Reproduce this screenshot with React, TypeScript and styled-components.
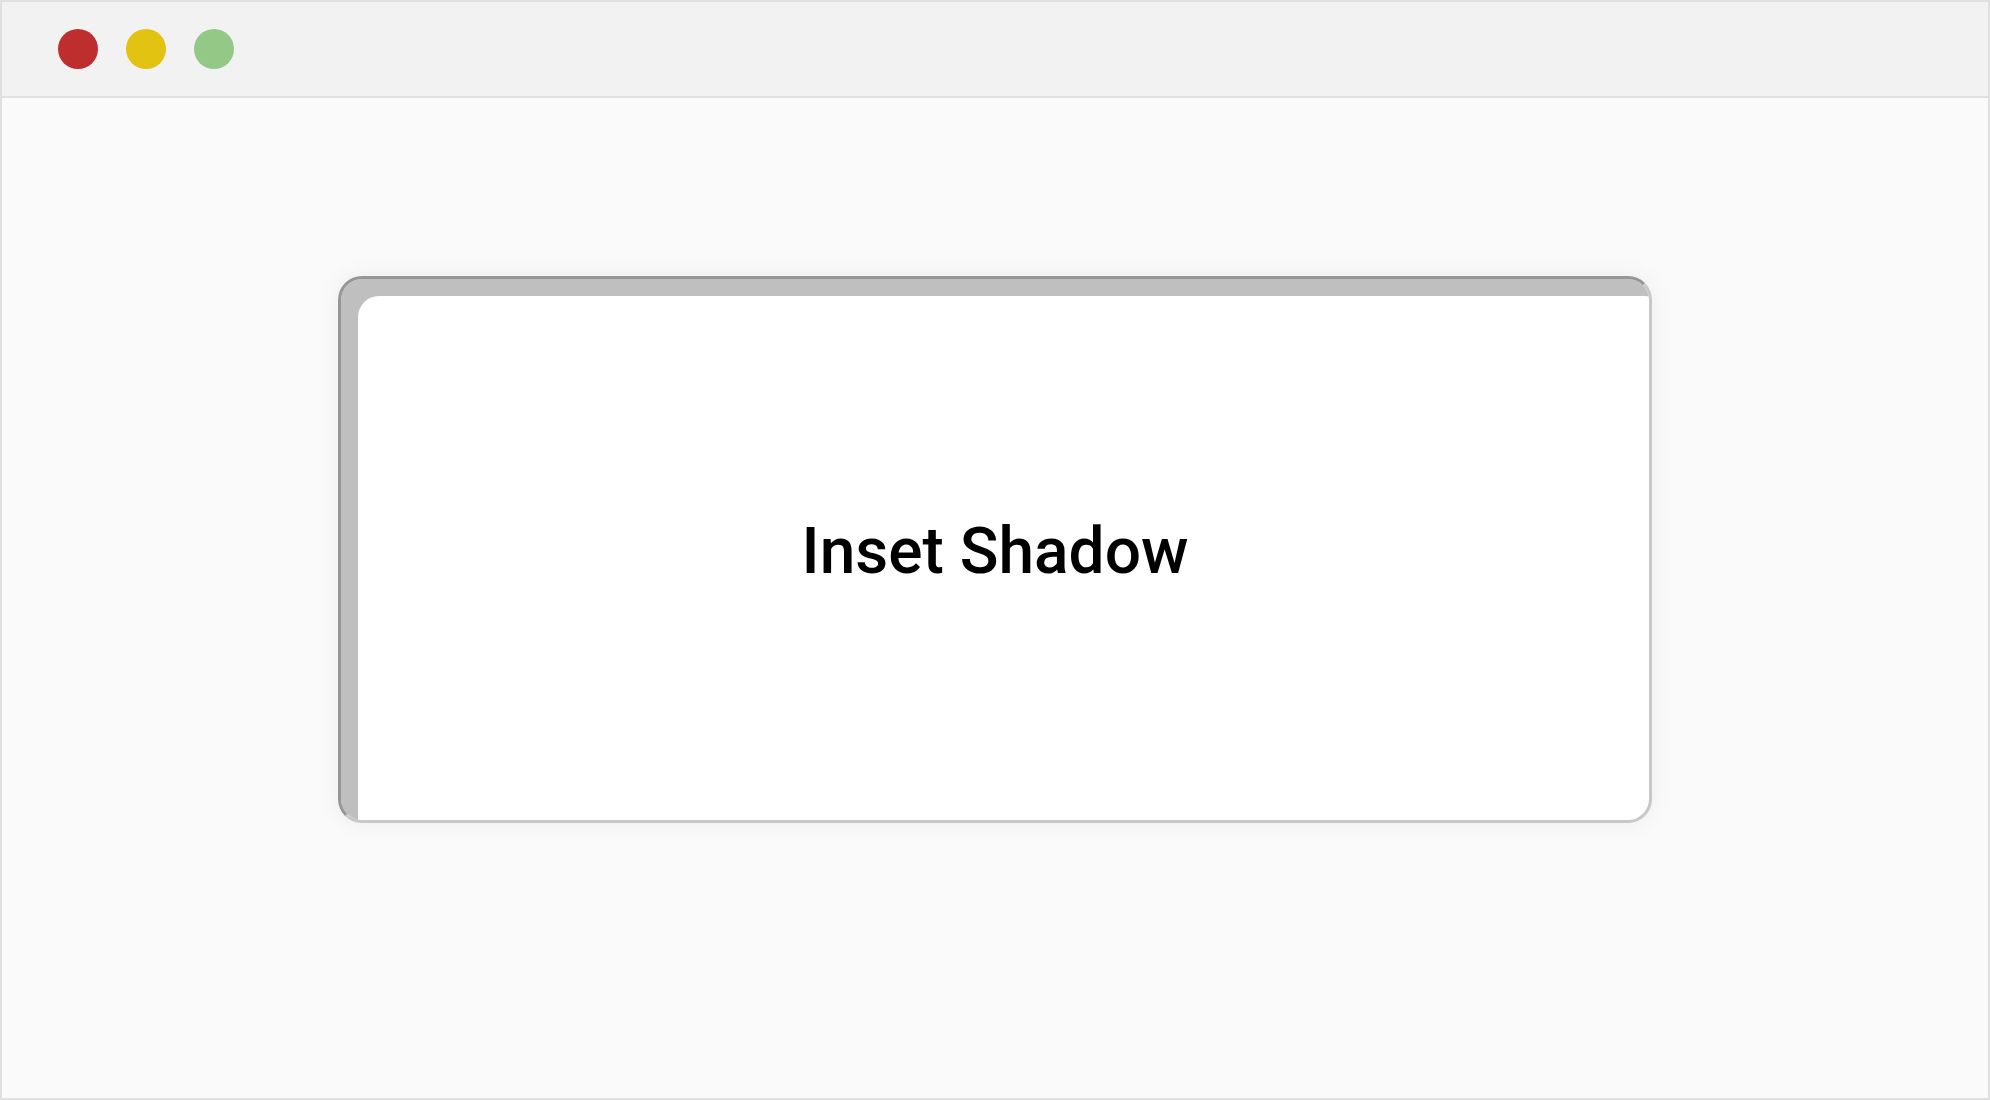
import React from "react";
import styled, { createGlobalStyle } from "styled-components";

const GlobalStyle = createGlobalStyle`
  html, body {
    margin: 0;
    padding: 0;
    background: #fafafa;
  }
  * {
    box-sizing: border-box;
  }
`;

const Window = styled.div`
  width: 1990px;
  height: 1100px;
  display: flex;
  flex-direction: column;
  border: 2px solid #e0e0e0;
  background: #fafafa;
  font-family: Roboto, "Liberation Sans", sans-serif;
`;

const TitleBar = styled.div`
  height: 96px;
  flex: none;
  display: flex;
  align-items: center;
  gap: 28px;
  padding-left: 56px;
  background: #f2f2f2;
  border-bottom: 2px solid #e0e0e0;
`;

const Dot = styled.span<{ $color: string }>`
  width: 40px;
  height: 40px;
  border-radius: 50%;
  background: ${(p) => p.$color};
`;

const Body = styled.main`
  flex: 1;
  display: flex;
  justify-content: center;
  align-items: flex-start;
  padding-top: 178px;
`;

const InsetCard = styled.div`
  width: 1314px;
  height: 547px;
  display: flex;
  align-items: center;
  justify-content: center;
  background: #ffffff;
  border: 3px solid;
  border-color: #969696 #c8c8c8 #c8c8c8 #969696;
  border-radius: 24px;
  box-shadow: inset 17px 17px 0 #bfbfbf, 0 0 24px rgba(0, 0, 0, 0.06);
`;

const Label = styled.h1`
  margin: 0;
  padding-top: 4px;
  font-family: Roboto, "Liberation Sans", sans-serif;
  font-size: 64px;
  font-weight: 500;
  line-height: 1;
  color: #000000;
`;

export default function App() {
  return (
    <>
      <GlobalStyle />
      <Window>
        <TitleBar>
          <Dot $color="#bf2e2e" />
          <Dot $color="#e2c312" />
          <Dot $color="#93c886" />
        </TitleBar>
        <Body>
          <InsetCard>
            <Label>Inset Shadow</Label>
          </InsetCard>
        </Body>
      </Window>
    </>
  );
}
